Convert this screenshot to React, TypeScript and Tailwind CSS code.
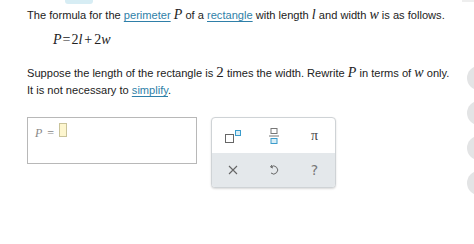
import React from "react";

const Serif = ({ children }: { children: React.ReactNode }) => (
  <span className="font-['Liberation_Serif',serif] italic text-[14px]">{children}</span>
);

const Link = ({ children }: { children: React.ReactNode }) => (
  <span className="text-[#2f7fa8] underline underline-offset-2 decoration-[#2f7fa8]">{children}</span>
);

export default function App() {
  return (
    <div className="relative w-[474px] h-[244px] overflow-hidden bg-white font-['Liberation_Sans',sans-serif] text-[11.1px] text-[#222]">
      {/* top decorations */}
      <div className="absolute left-[65px] top-0 w-[28px] h-[4px] rounded-b-[3px] bg-[#d7edf4]" />
      <div className="absolute right-0 top-0 w-[12px] h-[2px] bg-[#eeeeee]" />

      <div className="pl-[27px] pt-[6px]">
        <p className="h-[17px] leading-[17px] whitespace-nowrap">
          The formula for the <Link>perimeter</Link> <Serif>P</Serif> of a <Link>rectangle</Link> with length{" "}
          <Serif>l</Serif> and width <Serif>w</Serif> is as follows.
        </p>
        <p className="mt-[8px] pl-[26px] h-[18px] leading-[18px] font-['Liberation_Serif',serif] text-[14px] whitespace-nowrap">
          <i>P</i>
          <span className="mx-[1px]">=</span>2<i>l</i>
          <span className="mx-[2px]">+</span>2<i>w</i>
        </p>
        <p className="mt-[15px] h-[17px] leading-[17px] whitespace-nowrap">
          Suppose the length of the rectangle is <span className="font-['Liberation_Serif',serif] text-[15px]">2</span> times the
          width. Rewrite <Serif>P</Serif> in terms of <Serif>w</Serif> only.
        </p>
        <p className="mt-[1px] h-[17px] leading-[17px] whitespace-nowrap">
          It is not necessary to <Link>simplify</Link>.
        </p>

        <div className="mt-[18px] flex items-start gap-[14px]">
          <div className="w-[170px] h-[47px] border border-[#b8b8b8] pt-[5px] pl-[7px] flex items-start">
            <span className="font-['Liberation_Serif',serif] italic text-[12px] text-[#888] mt-[1px]">P</span>
            <span className="font-['Liberation_Serif',serif] text-[12px] text-[#888] mx-[5px] mt-[1px]">=</span>
            <span className="w-[8px] h-[14px] bg-[#fdf6cf] border border-[#c9c39a]" />
          </div>

          <div className="w-[125px] h-[71px] rounded-[4px] border border-[#cfd3d6] shadow-[0_1px_2px_rgba(0,0,0,0.15)] bg-white flex flex-col overflow-hidden">
            <div className="h-[35px] grid grid-cols-3 items-center justify-items-center">
              <svg width="18" height="14" viewBox="0 0 18 14">
                <rect x="1.5" y="5.5" width="8" height="8" fill="none" stroke="#666" />
                <rect x="11.5" y="1.5" width="5" height="5" fill="#d9eef6" stroke="#3b9ccc" />
              </svg>
              <svg width="10" height="16" viewBox="0 0 10 16">
                <rect x="2" y="0.5" width="6" height="5" fill="none" stroke="#777" />
                <line x1="0" y1="8" x2="10" y2="8" stroke="#777" />
                <rect x="2" y="10.5" width="6" height="5" fill="#d9eef6" stroke="#3b9ccc" />
              </svg>
              <span className="font-['Liberation_Serif',serif] text-[14px] text-[#444]">π</span>
            </div>
            <div className="flex-1 bg-[#e4e8eb] grid grid-cols-3 items-center justify-items-center text-[#666]">
              <svg width="10" height="10" viewBox="0 0 10 10">
                <path d="M1 1 L9 9 M9 1 L1 9" stroke="#666" strokeWidth="1.1" />
              </svg>
              <svg width="10" height="12" viewBox="0 0 10 12">
                <path d="M3 1 L1.5 3 L4 4" fill="none" stroke="#666" strokeWidth="1" />
                <path d="M2 3 A4 4 0 1 1 2 9" fill="none" stroke="#666" strokeWidth="1" />
              </svg>
              <span className="font-['DejaVu_Sans',sans-serif] text-[14px] leading-none text-[#777]">?</span>
            </div>
          </div>
        </div>
      </div>

      {/* side tools */}
      <div className="absolute left-[467px] top-[66px] flex flex-col gap-[11px]">
        <div className="w-[24px] h-[24px] rounded-full bg-[#e3e4e5]" />
        <div className="w-[24px] h-[24px] rounded-full bg-[#e3e4e5]" />
        <div className="w-[24px] h-[24px] rounded-full bg-[#e3e4e5]" />
        <div className="w-[24px] h-[24px] rounded-full bg-[#e3e4e5]" />
      </div>
    </div>
  );
}
